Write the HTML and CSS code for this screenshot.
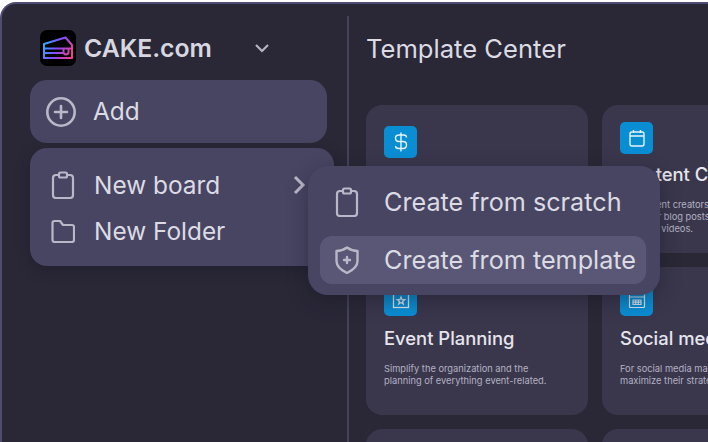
FILE: index.html
```html
<!DOCTYPE html>
<html>

<head>
    <link rel="stylesheet" href="styles.css">
</head>

<body>
    <div class="window">
        <div class="sidebar">
            <div class="brand">
                <div class="logo">
                    <svg width="36" height="36" viewBox="0 0 36 36" fill="none">
                        <defs>
                            <linearGradient id="cake" x1="3" y1="12" x2="33" y2="26" gradientUnits="userSpaceOnUse">
                                <stop offset="0" stop-color="#22b8ff" />
                                <stop offset="0.45" stop-color="#7f4dff" />
                                <stop offset="1" stop-color="#ff3d84" />
                            </linearGradient>
                        </defs>
                        <path d="M4 14 L25.5 7.5 L32 15 V28 H4 Z M4 18.5 H32 M4 23 H23 M23.5 18.5 V23 Q26 26 28.5 23 V18.5"
                            stroke="url(#cake)" stroke-width="2" stroke-linejoin="round" />
                    </svg>
                </div>
                <span class="brand-name">CAKE.com</span>
                <svg class="caret" width="16" height="16" viewBox="0 0 16 16" fill="none">
                    <path d="M2 5 L8 11 L14 5" stroke="#b5b3c4" stroke-width="2.2" />
                </svg>
            </div>

            <div class="add-box">
                <svg width="30" height="30" viewBox="0 0 30 30" fill="none" stroke="#b9b7c8" stroke-width="2.6" stroke-linecap="round">
                    <circle cx="15" cy="15" r="13.7" />
                    <path d="M15 9 V21 M9 15 H21" />
                </svg>
                <span class="add-label">Add</span>
            </div>

            <div class="menu">
                <div class="menu-row">
                    <svg width="24" height="28" viewBox="0 0 24 28" fill="none" stroke="#b9b7c8" stroke-width="2.2" stroke-linejoin="round">
                        <rect x="2" y="4" width="20" height="23" rx="3" />
                        <rect x="8" y="1.5" width="8" height="5" rx="1.5" fill="#484563" />
                    </svg>
                    <span class="menu-label">New board</span>
                    <svg class="arrow" width="14" height="20" viewBox="0 0 14 20" fill="none">
                        <path d="M2 2 L10 10 L2 18" stroke="#b9b7c8" stroke-width="3" />
                    </svg>
                </div>
                <div class="menu-row">
                    <svg width="24" height="24" viewBox="0 0 24 24" fill="none" stroke="#b9b7c8" stroke-width="2.2" stroke-linejoin="round">
                        <path d="M1.5 4 Q1.5 2 3.5 2 H9 L12 6 H21 Q23 6 23 8 V21 Q23 23 21 23 H3.5 Q1.5 23 1.5 21 Z" />
                    </svg>
                    <span class="menu-label">New Folder</span>
                </div>
            </div>
        </div>

        <div class="main">
            <h1 class="page-title">Template Center</h1>
            <div class="cards">
                <div class="card">
                    <div class="card-icon icon-low">
                        <svg width="14" height="20" viewBox="0 0 14 20" fill="none" stroke="#e6f4fc" stroke-width="1.4">
                            <path d="M12.5 5.5 Q12.5 3 9.5 3 H5 Q1.5 3 1.5 6 Q1.5 9.5 5 9.5 H9 Q12.5 9.5 12.5 13 Q12.5 16.5 9 16.5 H5 Q1.5 16.5 1.5 14 M7 0.5 V19.5" />
                        </svg>
                    </div>
                </div>
                <div class="card">
                    <div class="card-icon">
                        <svg width="18" height="18" viewBox="0 0 18 18" fill="none" stroke="#e6f4fc" stroke-width="1.4">
                            <rect x="2" y="3" width="14" height="14" rx="2" />
                            <path d="M2 7 H16 M5.5 1 V4 M12.5 1 V4" />
                        </svg>
                    </div>
                    <h2 class="card-title title-up">Content Creation</h2>
                    <p class="card-text">For content creators<br>Plan your blog posts<br>and your videos.</p>
                </div>
                <div class="card">
                    <div class="card-icon">
                        <svg width="18" height="18" viewBox="0 0 18 18" fill="none" stroke="#d5e6f2" stroke-width="1.3">
                            <rect x="1.5" y="2.5" width="15" height="14" />
                            <path d="M9 6 L10 8.6 L12.7 8.7 L10.6 10.4 L11.3 13 L9 11.5 L6.7 13 L7.4 10.4 L5.3 8.7 L8 8.6 Z" />
                        </svg>
                    </div>
                    <h2 class="card-title">Event Planning</h2>
                    <p class="card-text">Simplify the organization and the<br>planning of everything event-related.</p>
                </div>
                <div class="card">
                    <div class="card-icon">
                        <svg width="18" height="18" viewBox="0 0 18 18" fill="none" stroke="#d5e6f2" stroke-width="1.2">
                            <rect x="1.5" y="2.5" width="15" height="14" rx="1" />
                            <path d="M1.5 6 H16.5 M5 9 H13 V13.5 H5 Z M5 11.2 H13 M7.7 9 V13.5 M10.3 9 V13.5" />
                        </svg>
                    </div>
                    <h2 class="card-title">Social media</h2>
                    <p class="card-text">For social media managers to<br>maximize their strategy.</p>
                </div>
                <div class="card"></div>
                <div class="card"></div>
            </div>
        </div>

        <div class="popup">
            <div class="popup-row">
                <svg width="24" height="30" viewBox="0 0 24 30" fill="none" stroke="#b9b7c8" stroke-width="2.2" stroke-linejoin="round">
                    <rect x="2" y="4" width="20" height="25" rx="3" />
                    <rect x="8" y="1.5" width="8" height="5" rx="1.5" fill="#484563" />
                </svg>
                <span>Create from scratch</span>
            </div>
            <div class="popup-row active">
                <svg width="24" height="28" viewBox="0 0 24 28" fill="none" stroke="#b9b7c8" stroke-width="2.4" stroke-linejoin="round" stroke-linecap="round">
                    <path d="M12 1.5 Q17 5 22.5 5 V15 Q22.5 22 12 27 Q1.5 22 1.5 15 V5 Q7 5 12 1.5 Z" />
                    <path d="M12 11 V17 M9 14 H15" />
                </svg>
                <span>Create from template</span>
            </div>
        </div>
    </div>
</body>

</html>
```
FILE: styles.css
```css
* {
    box-sizing: border-box;
}

html, body {
    margin: 0;
    height: 442px;
    overflow: hidden;
    background: #fff;
}

body {
    font-family: "Inter", "Noto Sans", sans-serif;
    color: #dcdbe4;
}

.window {
    position: relative;
    display: flex;
    width: 720px;
    height: 450px;
    margin-top: 2px;
    overflow: hidden;
    background: #2a2837;
    border: 2px solid #4f4c72;
    border-right: none;
    border-bottom: none;
    border-radius: 16px 0 0 0;
}

.sidebar {
    width: 345px;
    padding: 26px 0 0 28px;
    flex-shrink: 0;
}

.brand {
    display: flex;
    align-items: center;
    height: 36px;
    margin: 0 0 14px 10px;
}

.logo {
    width: 36px;
    height: 36px;
    background: #000;
    border-radius: 7px;
}

.brand-name {
    margin-left: 8px;
    font-size: 24.8px;
    font-weight: 600;
    color: #d8d7e0;
}

.caret {
    margin-left: 42px;
}

.add-box {
    display: flex;
    align-items: center;
    gap: 17px;
    width: 297px;
    height: 63px;
    padding-left: 16px;
    font-size: 24.4px;
    background: #484563;
    border-radius: 17px;
}

.add-label {
    padding-bottom: 2px;
}

.menu {
    width: 304px;
    height: 118px;
    margin-top: 5px;
    padding-top: 14px;
    background: #484563;
    border-radius: 17px;
    box-shadow: 0 4px 14px rgba(20, 18, 32, 0.35);
}

.menu-row {
    position: relative;
    display: flex;
    align-items: center;
    height: 46px;
    padding-left: 21px;
    font-size: 24.4px;
}

.menu-label {
    margin-left: 19px;
}

.arrow {
    margin-left: auto;
    margin-right: 27px;
}

.main {
    flex: 1;
    margin-top: 12px;
    padding: 15px 0 0 17px;
    border-left: 2px solid #45435a;
}

.page-title {
    height: 36px;
    margin: 0;
    font-size: 25.6px;
    font-weight: 400;
    line-height: 36px;
    color: #dcdbe4;
}

.cards {
    display: grid;
    grid-template-columns: 222px 222px;
    grid-auto-rows: 148px;
    gap: 14px;
    margin-top: 38px;
}

.card {
    padding: 17px 18px;
    background: #3a374d;
    border-radius: 16px;
    overflow: hidden;
}

.card-icon {
    display: flex;
    align-items: center;
    justify-content: center;
    width: 33px;
    height: 32px;
    background: #0a8ed3;
    border-radius: 5px;
}

.icon-low {
    margin-top: 4px;
}

.card-title {
    margin: 10px 0 0;
    font-size: 18.4px;
    font-weight: 500;
    line-height: 24px;
    white-space: nowrap;
    color: #e6e5ec;
}

.title-up {
    margin-top: 8px;
}

.card-text {
    margin: 13px 0 0;
    font-size: 9.3px;
    line-height: 12px;
    white-space: nowrap;
    color: #b3b1c2;
}

.popup {
    position: absolute;
    left: 306px;
    top: 162px;
    width: 352px;
    height: 129px;
    padding: 12px 14px 12px 12px;
    background: #484563;
    border-radius: 20px;
    box-shadow: 0 6px 20px rgba(20, 18, 32, 0.4);
}

.popup-row {
    display: flex;
    align-items: center;
    gap: 25px;
    height: 48px;
    margin-bottom: 10px;
    padding-left: 15px;
    font-size: 25.2px;
    white-space: nowrap;
}

.popup-row.active {
    background: #5a5776;
    border-radius: 12px;
}
```
